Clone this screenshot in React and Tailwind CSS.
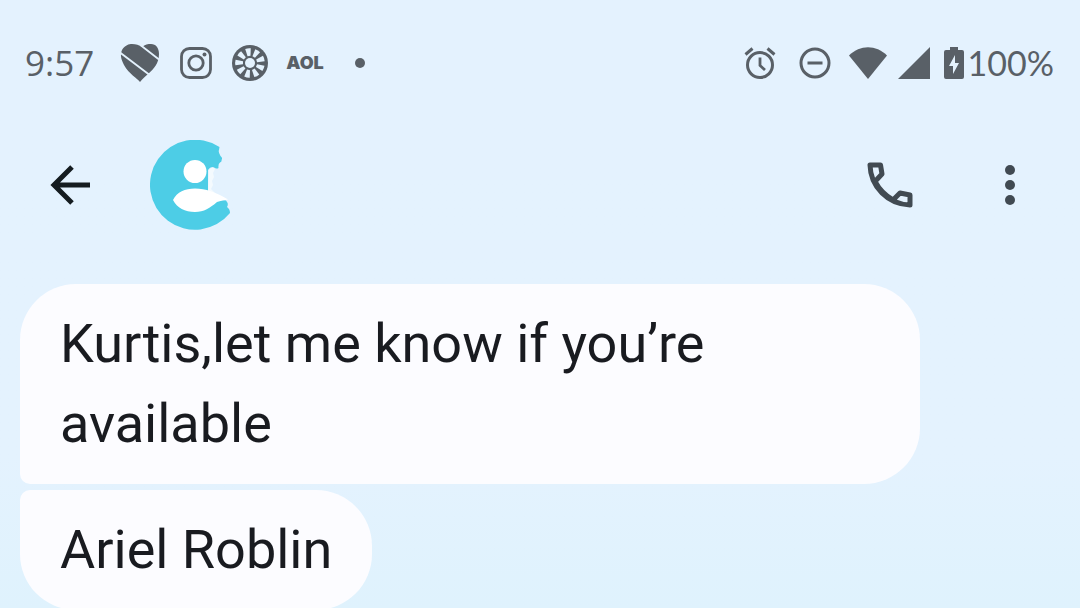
import React from 'react';

const messages = [
    { id: 1, text: 'Kurtis,let me know if you’re available' },
    { id: 2, text: 'Ariel Roblin' },
];

function HeartIcon() {
    return (
        <svg className="h-10 w-10" viewBox="0 0 40 40" fill="currentColor">
            <path d="M20 39C17 35 9 31 4 22C1 16 0 12 2 7C5 2 9 1 12 1C16 1 19 2 22 4C25 1.500 28 1 31 1C36 1 39 5 39 11C39 20 34 26 28 31C25 34 22 36 20 39Z" />
            <path d="M0 9.500L29 31.500M21 2.500L39 16.500" stroke="#e4f2fd" strokeWidth="1.800" />
        </svg>
    );
}

function InstagramIcon() {
    return (
        <svg className="h-8 w-8" viewBox="0 0 32 32" fill="none" stroke="currentColor" strokeWidth="2.800">
            <rect x="1.500" y="1.500" width="29" height="29" rx="8" />
            <circle cx="16" cy="16" r="7.200" />
            <circle cx="24.500" cy="7.500" r="2" fill="currentColor" stroke="none" />
        </svg>
    );
}

function WheelIcon() {
    const spokes = [0, 40, 80, 120, 160, 200, 240, 280, 320];

    return (
        <svg className="h-9 w-9" viewBox="0 0 36 36">
            <circle cx="18" cy="18" r="18" fill="currentColor" />
            <circle cx="18" cy="18" r="5" fill="#e4f2fd" />
            {spokes.map((angle) => (
                <path key={angle} d="M16.500 11L15.200 3.500Q18 2.800 20.800 3.500L19.500 11Z" fill="#e4f2fd" transform={`rotate(${angle - 8} 18 18)`} />
            ))}
        </svg>
    );
}

function AlarmIcon() {
    return (
        <svg className="h-8 w-8" viewBox="0 0 32 32" fill="none" stroke="currentColor" strokeWidth="3">
            <circle cx="16" cy="18" r="12.500" />
            <path d="M1.500 7.500L8.500 1.500M23.500 1.500L30.500 7.500" />
            <path d="M16 10.500V18.500L21 23" strokeWidth="2.800" />
        </svg>
    );
}

function DoNotDisturbIcon() {
    return (
        <svg className="h-8 w-8" viewBox="0 0 32 32" fill="none" stroke="currentColor" strokeWidth="3">
            <circle cx="16" cy="16" r="14" />
            <path d="M8.500 16H23.500" />
        </svg>
    );
}

function WifiIcon() {
    return (
        <svg className="h-8 w-10" viewBox="0 0 40 32" fill="currentColor">
            <path d="M20 32L1 8.500C12 -2.500 28 -2.500 39 8.500Z" />
        </svg>
    );
}

function SignalIcon() {
    return (
        <svg className="h-8 w-8" viewBox="0 0 32 32" fill="currentColor">
            <path d="M0 32L32 0V32Z" />
        </svg>
    );
}

function BatteryIcon() {
    return (
        <svg className="h-8 w-5" viewBox="0 0 20 32" fill="currentColor">
            <path d="M6 0H14V3H18Q20 3 20 5V30Q20 32 18 32H2Q0 32 0 30V5Q0 3 2 3H6Z" />
            <path d="M11 8L5 19H9V27L15 16H11Z" fill="#e4f2fd" />
        </svg>
    );
}

function BackIcon() {
    return (
        <svg className="h-10 w-10" viewBox="0 0 40 40" fill="none" stroke="currentColor" strokeWidth="5">
            <path d="M40 20H4M22 2L4 20L22 38" />
        </svg>
    );
}

function PhoneIcon() {
    return (
        <svg className="h-12 w-12" viewBox="0 0 48 48" fill="none" stroke="currentColor" strokeWidth="5" strokeLinejoin="round">
            <path d="M4 4H14.500L16 13L9 20.500C13.500 29 19 34.500 27 39L34 32L44 34V44C22 43.500 4.500 26 4 4Z" />
        </svg>
    );
}

function MoreIcon() {
    return (
        <svg className="h-10 w-10" viewBox="0 0 40 40" fill="currentColor">
            <circle cx="20" cy="5" r="5" />
            <circle cx="20" cy="20" r="5" />
            <circle cx="20" cy="35" r="5" />
        </svg>
    );
}

// Round contact logo with a bite taken out of the right side
function Avatar() {
    return (
        <svg className="size-[90px]" viewBox="0 0 90 90" role="img" aria-label="Contact">
            <path d="M59 30Q62 26 65 29L63 33L64 37L62 41L63 45L61 49L66 54H58Z" fill="#f4fafe" />
            <path
                d="M69.500 7A45 45 0 1 0 80 73Q80 69 77 67Q79 64 76 60.500Q72 60 68 61L58 58V30Q61 25.500 65 28Q67 29 68.500 28Q68 24 70 22.500Q72 22 71.500 20Q73 18 70.500 16Q68 12 69 10Z"
                fill="#4dcde6"
            />
            <circle cx="45" cy="31.500" r="11.500" fill="#fff" />
            <path d="M23 60C27 52 35 48.500 45 48.500C56 48.500 65 52 78 59.500Q72 60 67 62C60 68 54 72 45 72C35 72 27 68 23 60Z" fill="#fff" />
        </svg>
    );
}

function MessageBubble({ text, isFirst, isLast }) {
    return (
        <li
            className={`w-fit max-w-[900px] bg-[#fcfcff] px-10 py-5 rounded-[56px] ${isFirst ? '' : 'rounded-tl-[10px]'} ${isLast ? '' : 'rounded-bl-[10px]'}`}
        >
            <p className="text-[54px] leading-20 text-[#191b20]">{text}</p>
        </li>
    );
}

export default function App() {
    return (
        <div className="h-screen overflow-hidden bg-linear-to-b from-[#e4f2fe] from-75% to-[#dff2fd] font-['Roboto',sans-serif]">
            <div className="flex h-[125px] items-center justify-between pl-[25px] pr-[26px] text-[#596067]">
                <div className="flex items-center">
                    <span className="font-['Open_Sans',sans-serif] text-[35px] leading-10">9:57</span>
                    <div className="ml-[26px] flex items-center gap-5">
                        <HeartIcon />
                        <InstagramIcon />
                        <WheelIcon />
                    </div>
                    <span className="ml-[18px] font-['Inter',sans-serif] text-[18px] font-black">AOL</span>
                    <span className="ml-[31px] size-[10px] rounded-full bg-current"></span>
                </div>
                <div className="flex items-center">
                    <div className="flex items-center gap-[23px]">
                        <AlarmIcon />
                        <DoNotDisturbIcon />
                    </div>
                    <div className="ml-[17px] flex items-center gap-[10px]">
                        <WifiIcon />
                        <SignalIcon />
                    </div>
                    <div className="ml-[14px] flex items-center gap-1">
                        <BatteryIcon />
                        <span className="font-['Lato',sans-serif] text-[34px] leading-10">100%</span>
                    </div>
                </div>
            </div>

            <header className="flex h-30 items-center justify-between px-[50px] text-[#414a52]">
                <div className="flex items-center gap-[60px]">
                    <button type="button" aria-label="Back" className="text-[#151c20]">
                        <BackIcon />
                    </button>
                    <Avatar />
                </div>
                <div className="flex items-center gap-19">
                    <button type="button" aria-label="Call">
                        <PhoneIcon />
                    </button>
                    <button type="button" aria-label="More options">
                        <MoreIcon />
                    </button>
                </div>
            </header>

            <main className="px-5 pt-[39px]">
                <ul className="flex flex-col gap-[6px]">
                    {messages.map((msg, i) => (
                        <MessageBubble
                            key={msg.id}
                            text={msg.text}
                            isFirst={i === 0}
                            isLast={i === messages.length - 1}
                        />
                    ))}
                </ul>
            </main>
        </div>
    );
}
